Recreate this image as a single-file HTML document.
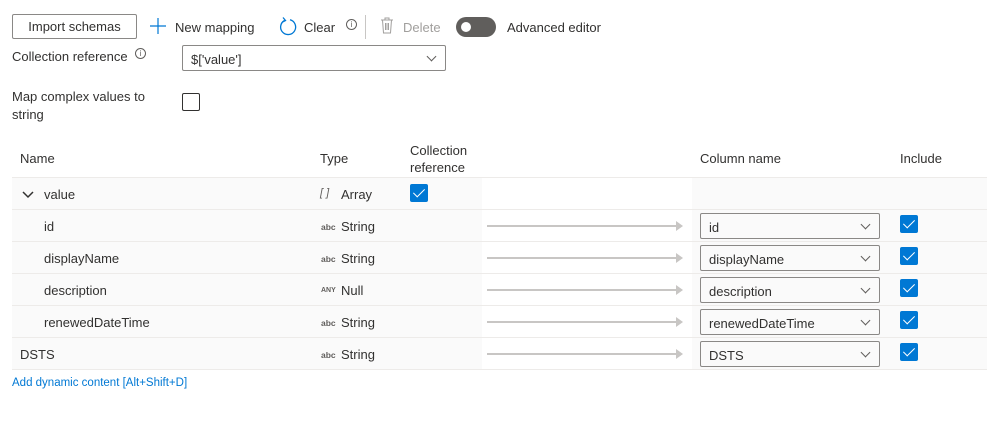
<!DOCTYPE html>
<html><head><style>
*{margin:0;padding:0;box-sizing:border-box}
body{width:987px;height:427px;background:#fff;font-family:"Liberation Sans",sans-serif;font-size:13px;color:#323130;position:relative;overflow:hidden}
.a{position:absolute;white-space:nowrap}
.row{position:absolute;left:12px;width:975px;height:32px;border-bottom:1px solid #edebe9}
.l{position:absolute;left:0;width:470px;height:31px;background:#fafafa}
.r{position:absolute;left:680px;width:295px;height:31px;background:#fafafa}
.t{position:absolute;top:9px}
.ico{position:absolute;left:309px;top:12px;font-size:8.5px;color:#605e5c;font-weight:bold}
.arrow{position:absolute;left:475px;top:15px;width:190px;height:2px;background:#c8c6c4}
.arrow:after{content:"";position:absolute;right:-6px;top:-4px;border-left:7px solid #c8c6c4;border-top:5px solid transparent;border-bottom:5px solid transparent}
.dd{position:absolute;left:688px;top:3px;width:180px;height:26px;border:1px solid #8a8886;border-radius:2px;padding:6px 8px;color:#323130}
.dd:after,.cr:after{content:"";position:absolute;right:10px;top:7px;width:6px;height:6px;border-right:1px solid #605e5c;border-bottom:1px solid #605e5c;transform:rotate(45deg)}
.cb{position:absolute;width:18px;height:18px;background:#0078d4;border-radius:2px}
.cb:after{content:"";position:absolute;left:6px;top:2px;width:5px;height:10px;border-right:1.5px solid #fff;border-bottom:1.5px solid #fff;transform:rotate(45deg)}
.inc{left:888px;top:5px}
</style></head><body>
<div class="a" style="left:12px;top:14px;width:125px;height:25px;border:1px solid #8a8886;border-radius:2px;text-align:center;line-height:23px">Import schemas</div>
<svg class="a" style="left:150px;top:18px" width="16" height="16"><path d="M8 0v16M0 8h16" stroke="#0078d4" stroke-width="1.2"/></svg>
<div class="a" style="left:175px;top:20px">New mapping</div>
<svg class="a" style="left:279px;top:16px" width="18" height="20" viewBox="0 0 18 20"><path d="M5.5 4.5A7.5 7.5 0 1 0 11 3.8" fill="none" stroke="#0078d4" stroke-width="1.3"/><path d="M4 1.5l2.5 3-3 1.5" fill="none" stroke="#0078d4" stroke-width="1.3"/></svg>
<div class="a" style="left:304px;top:20px">Clear</div>
<div class="a" style="left:346px;top:19px;width:11px;height:11px;border:1px solid #605e5c;border-radius:50%;font-size:8px;text-align:center;line-height:9px;color:#605e5c">i</div>
<div class="a" style="left:365px;top:15px;width:1px;height:24px;background:#c8c6c4"></div>
<svg class="a" style="left:380px;top:17px" width="14" height="17" viewBox="0 0 14 17"><path d="M1 3h12M5 3V1h4v2M2.5 3l1 13h7l1-13M5.5 6v7M7 6v7M8.5 6v7" fill="none" stroke="#a19f9d" stroke-width="1"/></svg>
<div class="a" style="left:403px;top:20px;color:#a19f9d">Delete</div>
<div class="a" style="left:456px;top:17px;width:40px;height:20px;border-radius:10px;background:#605e5c"><div style="position:absolute;left:5px;top:5px;width:10px;height:10px;border-radius:50%;background:#fff"></div></div>
<div class="a" style="left:507px;top:20px">Advanced editor</div>
<div class="a" style="left:12px;top:49px">Collection reference</div>
<div class="a" style="left:135px;top:48px;width:11px;height:11px;border:1px solid #605e5c;border-radius:50%;font-size:8px;text-align:center;line-height:9px;color:#605e5c">i</div>
<div class="a cr" style="left:182px;top:45px;width:264px;height:26px;border:1px solid #8a8886;border-radius:2px;padding:6px 8px">$['value']</div>
<div class="a" style="left:12px;top:88px;line-height:18px;white-space:normal;width:150px">Map complex values to string</div>
<div class="a" style="left:182px;top:93px;width:18px;height:18px;border:1px solid #323130;border-radius:2px"></div>
<div class="a" style="left:20px;top:151px">Name</div>
<div class="a" style="left:320px;top:151px">Type</div>
<div class="a" style="left:410px;top:142px;line-height:17px">Collection<br>reference</div>
<div class="a" style="left:700px;top:151px">Column name</div>
<div class="a" style="left:900px;top:151px">Include</div>
<div class="a" style="left:12px;top:177px;width:975px;height:1px;background:#edebe9"></div>

<div class="row" style="top:178px"><div class="l"></div><div class="r"></div>
<svg class="a" style="left:10px;top:13px" width="12" height="8"><path d="M1 1l5 5 5-5" fill="none" stroke="#323130" stroke-width="1.5"/></svg>
<div class="t" style="left:32px">value</div><div class="ico" style="font-style:italic;font-size:11px;top:9px;font-weight:normal;left:308px">[ ]</div><div class="t" style="left:329px">Array</div>
<div class="cb" style="left:398px;top:6px"></div></div>

<div class="row" style="top:210px"><div class="l"></div><div class="r"></div><div class="t" style="left:32px">id</div><div class="ico">abc</div><div class="t" style="left:329px">String</div><div class="arrow"></div><div class="dd">id</div><div class="cb inc"></div></div>
<div class="row" style="top:242px"><div class="l"></div><div class="r"></div><div class="t" style="left:32px">displayName</div><div class="ico">abc</div><div class="t" style="left:329px">String</div><div class="arrow"></div><div class="dd">displayName</div><div class="cb inc"></div></div>
<div class="row" style="top:274px"><div class="l"></div><div class="r"></div><div class="t" style="left:32px">description</div><div class="ico" style="font-size:7px;top:13px">ANY</div><div class="t" style="left:329px">Null</div><div class="arrow"></div><div class="dd">description</div><div class="cb inc"></div></div>
<div class="row" style="top:306px"><div class="l"></div><div class="r"></div><div class="t" style="left:32px">renewedDateTime</div><div class="ico">abc</div><div class="t" style="left:329px">String</div><div class="arrow"></div><div class="dd">renewedDateTime</div><div class="cb inc"></div></div>
<div class="row" style="top:338px"><div class="l"></div><div class="r"></div><div class="t" style="left:8px">DSTS</div><div class="ico">abc</div><div class="t" style="left:329px">String</div><div class="arrow"></div><div class="dd">DSTS</div><div class="cb inc"></div></div>

<div class="a" style="left:12px;top:377px;font-size:11.5px;color:#0078d4">Add dynamic content [Alt+Shift+D]</div>
</body></html>
